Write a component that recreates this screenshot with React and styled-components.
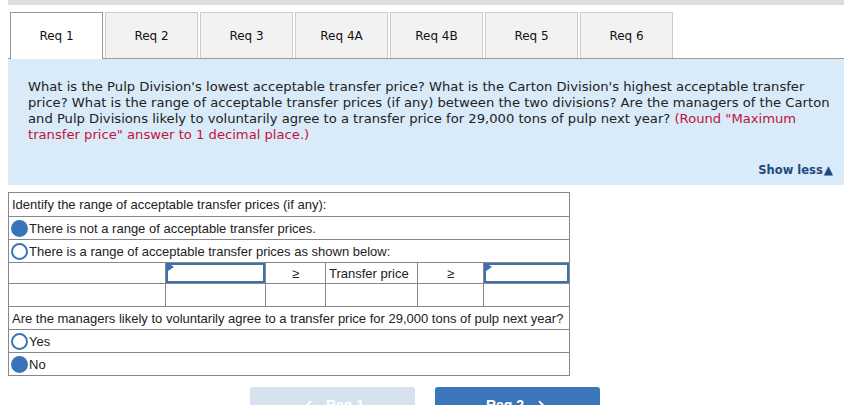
import styled, { createGlobalStyle } from "styled-components";
import { ChevronLeft, ChevronRight } from "lucide-react";

const tabs = ["Req 1", "Req 2", "Req 3", "Req 4A", "Req 4B", "Req 5", "Req 6"];

const GlobalStyle = createGlobalStyle`
  body {
    margin: 0;
    background: #fff;
    font-family: "Liberation Sans", Arial, sans-serif;
    color: #222;
  }
`;

function Radio({ checked, label }) {
    return (
        <RadioLine>
            <Dot $checked={checked} />
            {label}
        </RadioLine>
    );
}

function InputBox() {
    return (
        <Input>
            <Flag />
        </Input>
    );
}

export default function App() {
    return (
        <Page>
            <GlobalStyle />
            <TopBar />
            <TabRow>
                {tabs.map((t, i) => (
                    <Tab key={t} $active={i === 0}>{t}</Tab>
                ))}
            </TabRow>

            <Panel>
                <Prompt>
                    What is the Pulp Division's lowest acceptable transfer price? What is the Carton Division's highest acceptable transfer
                    price? What is the range of acceptable transfer prices (if any) between the two divisions? Are the managers of the Carton
                    and Pulp Divisions likely to voluntarily agree to a transfer price for 29,000 tons of pulp next year?{" "}
                    <Hint>(Round "Maximum transfer price" answer to 1 decimal place.)</Hint>
                </Prompt>
                <ShowLess>Show less<span>▲</span></ShowLess>
            </Panel>

            <Table>
                <colgroup>
                    <col style={{ width: 157 }} />
                    <col style={{ width: 100 }} />
                    <col style={{ width: 60 }} />
                    <col style={{ width: 92 }} />
                    <col style={{ width: 66 }} />
                    <col style={{ width: 86 }} />
                </colgroup>
                <tbody>
                    <tr><Cell colSpan={6} $tall>Identify the range of acceptable transfer prices (if any):</Cell></tr>
                    <tr><Cell colSpan={6} $radio><Radio checked label="There is not a range of acceptable transfer prices." /></Cell></tr>
                    <tr><Cell colSpan={6} $radio><Radio label="There is a range of acceptable transfer prices as shown below:" /></Cell></tr>
                    <tr>
                        <Cell $short />
                        <Cell $short $input><InputBox /></Cell>
                        <Cell $short $center>≥</Cell>
                        <Cell $short>Transfer price</Cell>
                        <Cell $short $center>≥</Cell>
                        <Cell $short $input><InputBox /></Cell>
                    </tr>
                    <tr>
                        <Cell /><Cell /><Cell /><Cell /><Cell /><Cell />
                    </tr>
                    <tr><Cell colSpan={6}>Are the managers likely to voluntarily agree to a transfer price for 29,000 tons of pulp next year?</Cell></tr>
                    <tr><Cell colSpan={6} $radio><Radio label="Yes" /></Cell></tr>
                    <tr><Cell colSpan={6} $radio><Radio checked label="No" /></Cell></tr>
                </tbody>
            </Table>

            <NavRow>
                <NavButton disabled><ChevronLeft size={15} strokeWidth={3} />Req 1</NavButton>
                <NavButton $primary>Req 2<ChevronRight size={15} strokeWidth={3} /></NavButton>
            </NavRow>
        </Page>
    );
}

/* styled-components */

const Page = styled.div`
  padding-left: 8px;
`;

const TopBar = styled.div`
  height: 5px;
  background: #dedede;
`;

const TabRow = styled.div`
  display: flex;
  gap: 2px;
  margin-top: 7px;
  padding-left: 2px;
  border-bottom: 1px solid #999;
`;

const Tab = styled.div`
  width: 93px;
  box-sizing: border-box;
  display: flex;
  align-items: center;
  justify-content: center;
  font-family: "DejaVu Sans", Verdana, sans-serif;
  font-size: 12px;
  color: #111;
  background: ${(p) => (p.$active ? "#fff" : "#f2f2f2")};
  border: 1px solid ${(p) => (p.$active ? "#999" : "#ccc")};
  border-bottom: none;
  margin-bottom: ${(p) => (p.$active ? "-1px" : "0")};
  height: ${(p) => (p.$active ? "47px" : "46px")};
`;

const Panel = styled.div`
  background: #d9eaf8;
  padding: 20px 11px 8px 20px;
`;

const Prompt = styled.p`
  margin: 0;
  font-family: "DejaVu Sans", Verdana, sans-serif;
  font-size: 13.15px;
  line-height: 16px;
  color: #222;
`;

const Hint = styled.span`
  color: #c0143c;
`;

const ShowLess = styled.div`
  margin-top: 20px;
  text-align: right;
  font-family: "DejaVu Sans", Verdana, sans-serif;
  font-size: 11.5px;
  font-weight: bold;
  color: #1f4a80;

  span {
    font-size: 12px;
    margin-left: 1px;
  }
`;

const Table = styled.table`
  margin-top: 7px;
  width: 561px;
  border-collapse: collapse;
  table-layout: fixed;
  font-size: 13px;
  color: #222;
`;

const Cell = styled.td`
  border: 1px solid #888;
  height: ${(p) => (p.$short ? "20px" : p.$tall ? "23px" : "22px")};
  padding: ${(p) => (p.$radio ? "0 0 0 2px" : p.$input ? "0" : "0 3px")};
  text-align: ${(p) => (p.$center ? "center" : "left")};
  white-space: nowrap;
  vertical-align: middle;
`;

const RadioLine = styled.div`
  display: flex;
  align-items: center;
  gap: 1px;
`;

const Dot = styled.span`
  width: 17px;
  height: 17px;
  box-sizing: border-box;
  border-radius: 50%;
  border: 2px solid #3a75bb;
  background: ${(p) => (p.$checked ? "#3a75bb" : "#fff")};
  flex: 0 0 auto;
`;

const Input = styled.div`
  position: relative;
  height: 20px;
  border: 2px solid #3d70b2;
  box-sizing: border-box;
  background: #fff;
`;

const Flag = styled.span`
  position: absolute;
  top: 0;
  left: 0;
  width: 0;
  height: 0;
  border-top: 4px solid transparent;
  border-bottom: 4px solid transparent;
  border-left: 6px solid #3d70b2;
  transform: translateY(-2px);
`;

const NavRow = styled.div`
  display: flex;
  gap: 20px;
  margin-top: 11px;
  padding-left: 242px;
`;

const NavButton = styled.button`
  width: 165px;
  height: 36px;
  display: flex;
  align-items: center;
  justify-content: center;
  gap: 10px;
  border: none;
  border-radius: 3px;
  font-family: "Liberation Sans", Arial, sans-serif;
  font-size: 14px;
  font-weight: bold;
  color: #fff;
  background: ${(p) => (p.$primary ? "#3a76b9" : "#d6e2f0")};
`;
